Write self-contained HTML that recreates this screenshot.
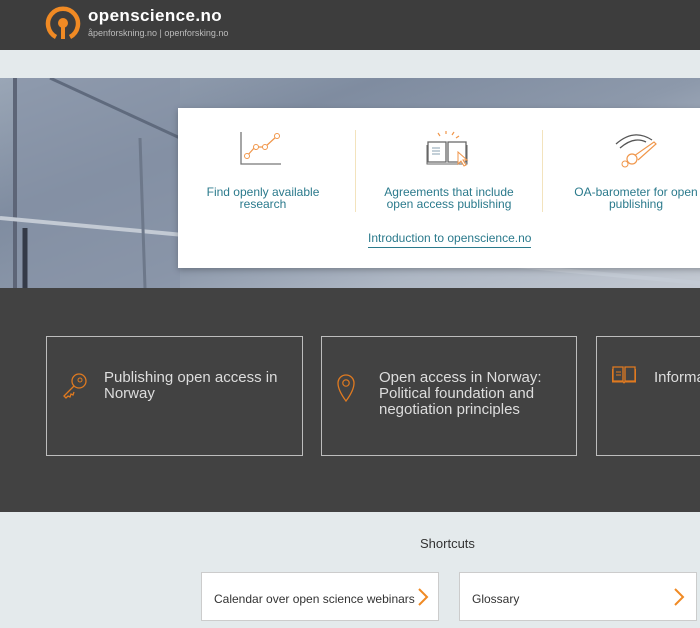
<!DOCTYPE html>
<html><head><meta charset="utf-8"><style>
*{margin:0;padding:0;box-sizing:border-box}
body{width:700px;height:628px;overflow:hidden;font-family:"Liberation Sans",sans-serif;background:#e4eaec;position:relative}
.hdr{position:absolute;left:0;top:0;width:700px;height:50px;background:#3d3d3d}
.band{position:absolute;left:0;top:50px;width:700px;height:28px;background:#e4eaec}
.hero{position:absolute;left:0;top:78px;width:700px;height:210px;background:linear-gradient(160deg,#9aa6b6 0%,#7f8ca0 30%,#8d99ab 55%,#aeb7c4 75%,#c3c9d2 100%);overflow:hidden}
.card{position:absolute;left:178px;top:108px;width:530px;height:160px;background:#fff;box-shadow:0 2px 6px rgba(0,0,0,.25)}
.col{position:absolute;top:78px;width:170px;text-align:center;color:#2b7a8c;font-size:12px;line-height:12px}
.sep{position:absolute;top:22px;width:1px;height:82px;background:#f3e3bd}
.intro{position:absolute;left:190px;top:124px;font-size:12px;color:#2b7a8c;border-bottom:1px solid #2b7a8c;padding-bottom:2px;line-height:13px}
.dark{position:absolute;left:0;top:288px;width:700px;height:224px;background:#424242}
.box{position:absolute;top:48px;height:120px;border:1px solid #bdbdbd}
.box .t{position:absolute;left:57px;top:33px;color:#ddd;font-size:15px;line-height:16px;width:190px}
.box svg{position:absolute}
.sc{position:absolute;top:572px;height:49px;background:#fff;border:1px solid #ccc;font-size:12px;color:#333}
.sc span{position:absolute;left:12px;top:19px}
.sc svg{position:absolute;top:15px}
</style></head><body>
<div class="hdr">
<svg style="position:absolute;left:45px;top:5px" width="36" height="36" viewBox="0 0 36 36"><path d="M11 32 A15 15 0 1 1 25 32" fill="none" stroke="#f08a24" stroke-width="4.5"/><circle cx="18" cy="18" r="5" fill="#f08a24"/><rect x="16" y="18" width="4" height="16" fill="#f08a24"/></svg>
<div style="position:absolute;left:88px;top:6px;color:#fff;font-weight:bold;font-size:17px;letter-spacing:.4px">openscience.no</div>
<div style="position:absolute;left:88px;top:28px;color:#bbb;font-size:9px">åpenforskning.no | openforsking.no</div>
</div>
<div class="band"></div>
<div class="hero">
<svg width="700" height="210" style="position:absolute;left:0;top:0"><polygon points="15,0 180,0 180,210 15,210" fill="#8793a7" opacity=".6"/><line x1="15" y1="0" x2="15" y2="210" stroke="#5d6577" stroke-width="4"/><line x1="0" y1="140" x2="700" y2="205" stroke="#c3cad4" stroke-width="4"/><line x1="140" y1="60" x2="145" y2="210" stroke="#6d788a" stroke-width="3"/><line x1="25" y1="150" x2="25" y2="210" stroke="#343a48" stroke-width="5"/><line x1="50" y1="0" x2="180" y2="60" stroke="#5f6a7d" stroke-width="3"/></svg>
</div>
<div class="card">
<svg style="position:absolute;left:61px;top:22px" width="44" height="36" viewBox="0 0 44 36"><path d="M2 2V34H42" fill="none" stroke="#777" stroke-width="1.3"/><path d="M8 26L16 17H26L38 6" fill="none" stroke="#f0964a" stroke-width="1.2"/><circle cx="8" cy="26" r="2.5" fill="#fff" stroke="#f0964a"/><circle cx="17" cy="17" r="2.5" fill="#fff" stroke="#f0964a"/><circle cx="26" cy="17" r="2.5" fill="#fff" stroke="#f0964a"/><circle cx="38" cy="6" r="2.5" fill="#fff" stroke="#f0964a"/></svg>
<div class="col" style="left:0">Find openly available<br>research</div>
<div class="sep" style="left:177px"></div>
<svg style="position:absolute;left:248px;top:22px" width="44" height="42" viewBox="0 0 44 42"><path d="M14 6l-2-3M20 4V1M26 5l2-3M30 8l3-2" stroke="#f0964a" stroke-width="1.2"/><path d="M2 12h18v20H2zM22 12h18v20H22z" fill="none" stroke="#666" stroke-width="1.3"/><path d="M1 15v19h40V15" fill="none" stroke="#666"/><path d="M6 18h8M6 21h8M6 24h8" stroke="#8aa0b0"/><path d="M32 22l0 12 3-3 3 5 2-1-3-5h4z" fill="#fff" stroke="#f0964a"/></svg>
<div class="col" style="left:186px">Agreements that include<br>open access publishing</div>
<div class="sep" style="left:364px"></div>
<svg style="position:absolute;left:434px;top:22px" width="48" height="40" viewBox="0 0 48 40"><path d="M4 14Q22-2 40 10" fill="none" stroke="#555" stroke-width="1.3"/><path d="M8 18Q22 6 34 12" fill="none" stroke="#555" stroke-width="1.3"/><path d="M22 26L42 12 44 14 26 30" fill="none" stroke="#f0964a" stroke-width="1.2"/><circle cx="20" cy="29" r="5" fill="#fff" stroke="#f0964a" stroke-width="1.2"/><circle cx="13" cy="34" r="3" fill="#fff" stroke="#f0964a"/></svg>
<div class="col" style="left:373px">OA-barometer for open<br>publishing</div>
<div class="intro">Introduction to openscience.no</div>
</div>
<div class="dark">
<div class="box" style="left:46px;width:257px"><svg style="left:14px;top:34px" width="28" height="28" viewBox="0 0 28 28"><circle cx="18" cy="10" r="7" fill="none" stroke="#e07a20" stroke-width="1.3"/><circle cx="19" cy="9" r="2" fill="none" stroke="#e07a20"/><path d="M13 15L3 25l2 2 2-2 2 1 1-3 2 1 1-3" fill="none" stroke="#e07a20" stroke-width="1.3"/></svg><div class="t">Publishing open access in Norway</div></div>
<div class="box" style="left:321px;width:256px"><svg style="left:14px;top:36px" width="20" height="30" viewBox="0 0 20 30"><path d="M10 28C4 20 2 15 2 10a8 8 0 0116 0c0 5-2 10-8 18z" fill="none" stroke="#e07a20" stroke-width="1.3"/><circle cx="10" cy="10" r="3.2" fill="none" stroke="#e07a20" stroke-width="1.2"/></svg><div class="t">Open access in Norway: Political foundation and negotiation principles</div></div>
<div class="box" style="left:596px;width:120px"><svg style="left:15px;top:28px" width="24" height="20" viewBox="0 0 24 20"><path d="M1 2h10v14H1zM13 2h10v14H13z" fill="none" stroke="#e07a20" stroke-width="1.3"/><path d="M0 4v13h24V4M11 17l1 1 1-1M4 7h5M4 10h5" fill="none" stroke="#e07a20"/></svg><div class="t" style="left:57px">Informa</div></div>
</div>
<div style="position:absolute;left:420px;top:536px;font-size:13px;color:#333">Shortcuts</div>
<div class="sc" style="left:201px;width:238px"><span>Calendar over open science webinars</span><svg style="left:215px" width="12" height="18" viewBox="0 0 12 18"><path d="M2 1l8 8-8 8" fill="none" stroke="#f08a24" stroke-width="2"/></svg></div>
<div class="sc" style="left:459px;width:238px"><span>Glossary</span><svg style="left:213px" width="12" height="18" viewBox="0 0 12 18"><path d="M2 1l8 8-8 8" fill="none" stroke="#f08a24" stroke-width="2"/></svg></div>
</body></html>
